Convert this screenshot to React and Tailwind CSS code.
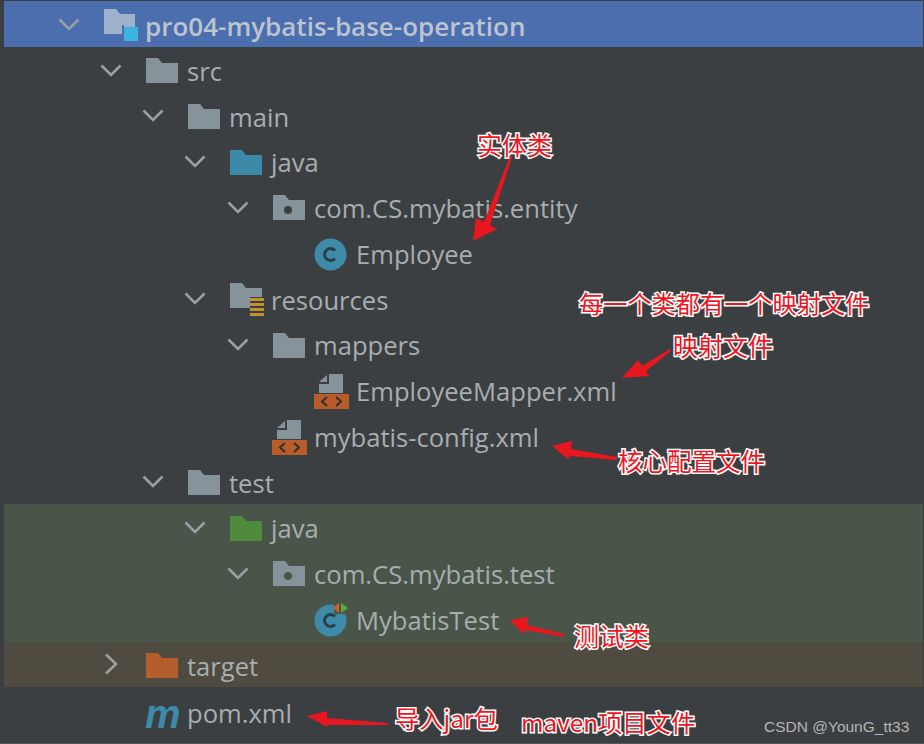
const UI_FONT = "font-['Open_Sans','Noto_Sans',sans-serif]";

function Chevron({ open }) {
  return (
    <svg width="22" height="22" viewBox="0 0 22 22" fill="none" stroke="#9b9fa1" strokeWidth="2.6">
      {open ? <path d="M1.5 6.5 L11 16 L20.5 6.5" /> : <path d="M6 1.5 L16 11 L6 20.5" />}
    </svg>
  );
}

function Folder({ color = "#87939a", children }) {
  return (
    <svg width="34" height="28" viewBox="0 0 34 28">
      <path d="M1 1 H13 L17 6 H33 V26 H1 Z" fill={color} />
      {children}
    </svg>
  );
}

function ModuleIcon() {
  return (
    <svg width="36" height="34" viewBox="0 0 36 34">
      <path d="M1 1 H13 L17 6 H32 V24 H20 V26 H1 Z" fill="#9fb2cc" />
      <path d="M21 19 H35 V33 H21 Z" fill="#3bb4e0" />
      <path d="M19 17 H21 V33 H19 Z" fill="#4b6eaf" />
    </svg>
  );
}

function ResourceFolder() {
  return (
    <svg width="36" height="36" viewBox="0 0 36 36">
      <path d="M1 1 H13 L17 6 H33 V15 H21 V26 H1 Z" fill="#87939a" />
      <path d="M21 16 H35 V19 H21 Z M21 21 H35 V24 H21 Z M21 26 H35 V29 H21 Z M21 31 H35 V34 H21 Z" fill="#c2922f" />
    </svg>
  );
}

function ClassIcon({ test }) {
  return (
    <svg width="34" height="34" viewBox="0 0 34 34">
      <circle cx="16.5" cy="17.5" r="16" fill="#3d8ba9" />
      <path d="M21 13.5 A6 6 0 1 0 21 21.5" fill="none" stroke="#2b3e48" strokeWidth="2.8" />
      {test && (
        <>
          <path d="M20 1 H35 V11 H20 Z" fill="#4a5549" />
          <path d="M25 0 L25 10 L19 5 Z" fill="#d0652a" />
          <path d="M27 0 L27 10 L34 5 Z" fill="#5cab3d" />
        </>
      )}
    </svg>
  );
}

function XmlIcon() {
  return (
    <svg width="35" height="36" viewBox="0 0 35 36">
      <path d="M15 1 H29 V20 H5 V11 H15 Z" fill="#87939a" />
      <path d="M5 9 L13 2 V9 Z" fill="#87939a" />
      <path d="M0 21 H35 V36 H0 Z" fill="#b85c2a" />
      <path d="M13 24 L8 28.5 L13 33 M22 24 L27 28.5 L22 33" fill="none" stroke="#2f2f2f" strokeWidth="2" />
    </svg>
  );
}

function MavenIcon() {
  return (
    <span className="inline-block font-['Liberation_Sans',sans-serif] text-[40px] leading-none font-bold italic text-[#3d8ba9]">
      m
    </span>
  );
}

const ROWS = [
  { pad: "pl-[54px]", label: "pro04-mybatis-base-operation", icon: <ModuleIcon />, open: true, bg: "bg-[#4b6eaf]", bold: true },
  { pad: "pl-[96px]", label: "src", icon: <Folder />, open: true },
  { pad: "pl-[138px]", label: "main", icon: <Folder />, open: true },
  { pad: "pl-[180px]", label: "java", icon: <Folder color="#3d89a8" />, open: true },
  { pad: "pl-[223px]", label: "com.CS.mybatis.entity", icon: <Folder><circle cx="16" cy="16" r="4" fill="#3c3f41" /></Folder>, open: true },
  { pad: "pl-[265px]", label: "Employee", icon: <ClassIcon /> },
  { pad: "pl-[180px]", label: "resources", icon: <ResourceFolder />, open: true },
  { pad: "pl-[223px]", label: "mappers", icon: <Folder />, open: true },
  { pad: "pl-[265px]", label: "EmployeeMapper.xml", icon: <XmlIcon /> },
  { pad: "pl-[223px]", label: "mybatis-config.xml", icon: <XmlIcon /> },
  { pad: "pl-[138px]", label: "test", icon: <Folder />, open: true },
  { pad: "pl-[180px]", label: "java", icon: <Folder color="#4f8a3d" />, open: true, bg: "bg-[#4a5549]" },
  { pad: "pl-[223px]", label: "com.CS.mybatis.test", icon: <Folder><circle cx="16" cy="16" r="4" fill="#4a5549" /></Folder>, open: true, bg: "bg-[#4a5549]" },
  { pad: "pl-[265px]", label: "MybatisTest", icon: <ClassIcon test />, bg: "bg-[#4a5549]" },
  { pad: "pl-[96px]", label: "target", icon: <Folder color="#b55e2d" />, closed: true, bg: "bg-[#4f4b41]" },
  { pad: "pl-[96px] pt-1", label: "pom.xml", icon: <MavenIcon /> },
];

function Row({ row }) {
  return (
    <div className={`flex h-[45.75px] items-center ${row.pad} ${row.bg || ""}`}>
      <div className="w-[45px] shrink-0">
        {row.open && <Chevron open />}
        {row.closed && <Chevron />}
      </div>
      <div className="flex w-[42px] shrink-0 items-center pt-[3px]">{row.icon}</div>
      <span className={`${UI_FONT} pt-1 leading-none whitespace-nowrap ${row.bold ? "text-[26px] font-semibold text-[#bcc4d0]" : "text-[25.6px] text-[#a8adaf]"}`}>
        {row.label}
      </span>
    </div>
  );
}

// red notes pasted on top of the screenshot
const NOTES = [
  { text: "实体类", cls: "left-[477px] top-[128px] text-[25px]" },
  { text: "每一个类都有一个映射文件", cls: "left-[579px] top-[287px] text-[24.2px]" },
  { text: "映射文件", cls: "left-[673px] top-[329px] text-[25px]" },
  { text: "核心配置文件", cls: "left-[618px] top-[445px] text-[24.5px]" },
  { text: "测试类", cls: "left-[574px] top-[619px] text-[25px]" },
  { text: "导入jar包", cls: "left-[395px] top-[702px] text-[24.3px]" },
  { text: "maven项目文件", cls: "left-[521px] top-[706px] text-[24.3px]" },
];

function Arrows() {
  return (
    <svg className="absolute inset-0" width="924" height="744" fill="#e8171f">
      <path d="M473 241 L476 218 L484 222 L510 156 L512 157 L490 225 L497 229 Z" />
      <path d="M622 378 L638 360 L642 366 L670 349 L671 351 L646 371 L649 376 Z" />
      <path d="M552 446 L572 441 L571 449 L617 457 L617 460 L570 456 L568 459 Z" />
      <path d="M510 620 L528 617 L527 625 L564 634 L564 637 L525 630 L523 634 Z" />
      <path d="M307 716 L327 711 L327 718 L388 723 L388 725 L327 725 L327 727 Z" />
    </svg>
  );
}

export default function App() {
  return (
    <div className="relative h-[744px] w-[924px] overflow-hidden bg-[#3c3f41]">
      <div className="pt-px pr-px pl-[4px]">
        {ROWS.map((row, i) => (
          <Row key={i} row={row} />
        ))}
      </div>
      <Arrows />
      {NOTES.map((n) => (
        <span
          key={n.text}
          className={`absolute ${n.cls} font-['Noto_Sans_CJK_SC','Noto_Sans',sans-serif] leading-[32px] whitespace-nowrap text-[#f0141e] [-webkit-text-stroke:3px_#ffffff] [paint-order:stroke_fill]`}
        >
          {n.text}
        </span>
      ))}
      <span className="absolute left-[764px] top-[718px] font-['Liberation_Sans',sans-serif] text-[15.5px] leading-[18px] whitespace-nowrap text-[#b4b5b6]">
        CSDN @YounG_tt33
      </span>
      <div className="absolute bottom-0 left-0 h-px w-full bg-[#55585a]" />
    </div>
  );
}
